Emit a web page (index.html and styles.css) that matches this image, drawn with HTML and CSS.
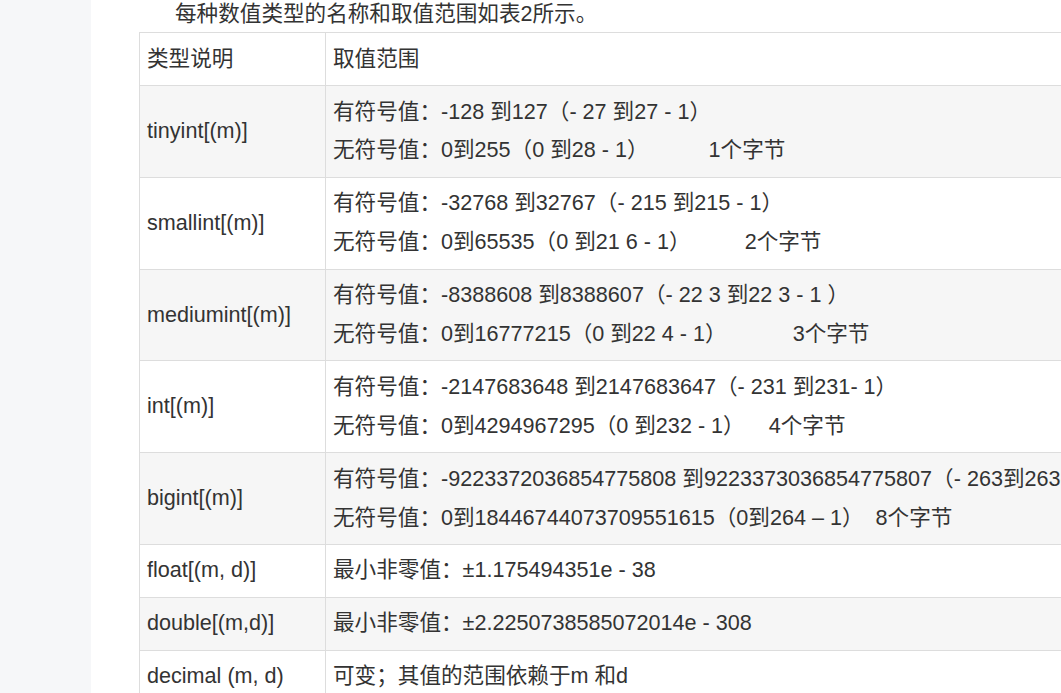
FILE: index.html
```html
<!DOCTYPE html>
<html lang="zh">
<head>
<meta charset="utf-8">
<title>数值类型</title>
<link rel="stylesheet" href="styles.css">
</head>
<body>
<div class="page">
  <aside class="sidebar"></aside>
  <main class="content">
    <p class="intro">每种数值类型的名称和取值范围如表2所示。</p>
    <table class="types">
      <thead>
        <tr><th class="c1">类型说明</th><th class="c2">取值范围</th></tr>
      </thead>
      <tbody>
        <tr class="alt">
          <td>tinyint[(m)]</td>
          <td><div class="ln">有符号值：-128 到127（- 27 到27 - 1）</div><div class="ln">无符号值：0到255（0 到28 - 1）          1个字节</div></td>
        </tr>
        <tr>
          <td>smallint[(m)]</td>
          <td><div class="ln">有符号值：-32768 到32767（- 215 到215 - 1）</div><div class="ln">无符号值：0到65535（0 到21 6 - 1）         2个字节</div></td>
        </tr>
        <tr class="alt">
          <td>mediumint[(m)]</td>
          <td><div class="ln">有符号值：-8388608 到8388607（- 22 3 到22 3 - 1 ）</div><div class="ln">无符号值：0到16777215（0 到22 4 - 1）           3个字节</div></td>
        </tr>
        <tr>
          <td>int[(m)]</td>
          <td><div class="ln">有符号值：-2147683648 到2147683647（- 231 到231- 1）</div><div class="ln">无符号值：0到4294967295（0 到232 - 1）    4个字节</div></td>
        </tr>
        <tr class="alt">
          <td>bigint[(m)]</td>
          <td><div class="ln">有符号值：-9223372036854775808 到9223373036854775807（- 263到263-1）</div><div class="ln">无符号值：0到18446744073709551615（0到264 – 1）  8个字节</div></td>
        </tr>
        <tr>
          <td>float[(m, d)]</td>
          <td><div class="ln">最小非零值：±1.175494351e - 38</div></td>
        </tr>
        <tr class="alt">
          <td>double[(m,d)]</td>
          <td><div class="ln">最小非零值：±2.2250738585072014e - 308</div></td>
        </tr>
        <tr>
          <td>decimal (m, d)</td>
          <td><div class="ln">可变；其值的范围依赖于m 和d</div></td>
        </tr>
      </tbody>
    </table>
  </main>
</div>
</body>
</html>
```
FILE: styles.css
```css
html, body {
  margin: 0;
  padding: 0;
  overflow: hidden;
  height: 100%;
  background: #ffffff;
}
body {
  font-family: "Liberation Sans", "Noto Sans CJK SC", sans-serif;
  font-size: 21.6px;
  color: #333333;
}
.page {
  display: flex;
  height: 100%;
}
.sidebar {
  flex: 0 0 91px;
  background: #f6f7f9;
}
.content {
  flex: 1 1 auto;
  min-width: 0;
  padding: 0 0 0 48px;
}
.intro {
  margin: 0 0 4px;
  line-height: 28px;
  text-indent: 36px;
}
.types {
  border-collapse: collapse;
  width: 1120px;
  table-layout: fixed;
}
.types th,
.types td {
  border: 1px solid #dddddd;
  padding: 6.6px 8px 6.6px 7px;
  line-height: 38.8px;
  text-align: left;
  vertical-align: middle;
  font-weight: normal;
  white-space: pre;
  overflow: hidden;
}
.types .c1 {
  width: 170px;
}
.types thead th {
  background: #ffffff;
}
.types tr.alt td {
  background: #f6f6f6;
}
.ln {
  white-space: pre;
}
```
